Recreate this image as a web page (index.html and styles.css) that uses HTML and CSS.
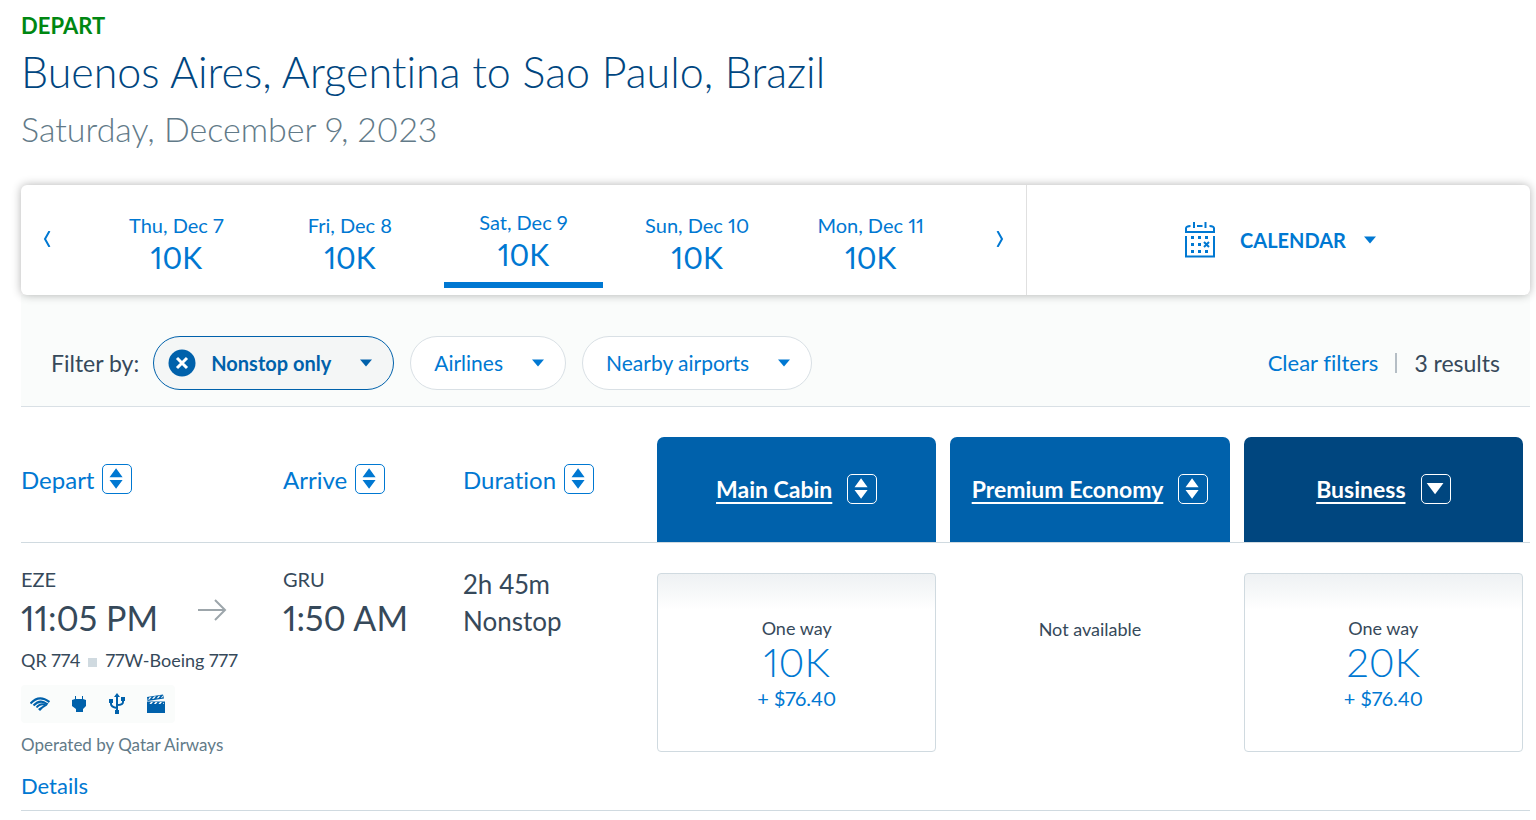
FILE: index.html
```
<!DOCTYPE html>
<html lang="en">
<head>
<meta charset="utf-8">
<meta name="viewport" content="width=device-width, initial-scale=1">
<title>Choose flights</title>
<link rel="stylesheet" href="styles.css">
</head>
<body>
<svg class="defs" aria-hidden="true">
  <symbol id="sort" viewBox="0 0 30 30"><path d="M14 3.500l7 9.500H7zM7 16h14l-7 9.500z"/></symbol>
  <symbol id="sorted" viewBox="0 0 30 30"><path d="M5 8.500h18l-9 12z"/></symbol>
  <symbol id="caret" viewBox="0 0 12 8"><path d="M0 .5h12L6 7.500z"/></symbol>
</svg>
<main class="page">
  <header class="heading">
    <p class="eyebrow">DEPART</p>
    <h1 class="route">Buenos Aires, Argentina to Sao Paulo, Brazil</h1>
    <p class="travel-date">Saturday, December 9, 2023</p>
  </header>

  <nav class="dates" aria-label="Travel dates">
    <div class="week">
      <button class="step step-back" aria-label="Previous dates"><svg width="10" height="16" viewBox="0 0 10 16"><path d="M7.500 0L3 8l4.500 8"/></svg></button>
      <button class="day"><span class="day-name">Thu, Dec 7</span><span class="day-price">10K</span></button>
      <button class="day"><span class="day-name">Fri, Dec 8</span><span class="day-price">10K</span></button>
      <button class="day day-on" aria-current="date"><span class="day-name">Sat, Dec 9</span><span class="day-price">10K</span></button>
      <button class="day"><span class="day-name">Sun, Dec 10</span><span class="day-price">10K</span></button>
      <button class="day"><span class="day-name">Mon, Dec 11</span><span class="day-price">10K</span></button>
      <button class="step step-on" aria-label="Next dates"><svg width="10" height="16" viewBox="0 0 10 16"><path d="M2.500 0L7 8l-4.500 8"/></svg></button>
    </div>
    <button class="calendar">
      <svg class="calendar-icon" width="30" height="36" viewBox="0 0 30 36">
        <path class="line" d="M1 10.500V6.500Q1 4 5.500 4M24.500 4Q29 4 29 6.500V10.500M0 10h30M9 0v6M20.500 0v6M12 4h5.500M1 14v20.500h28V14"/>
        <path d="M6 14h3v3H6zM13 14h3v3h-3zM20 14h3v3h-3zM6 21h3v3H6zM13 21h3v3h-3zM6 28h3v3H6zM13 28h3v3h-3zM20 28h3v3h-3z"/>
        <path class="line" d="M19 20l5 5M24 20l-5 5"/>
      </svg>
      <span>CALENDAR</span>
      <svg class="caret" width="12" height="8"><use href="#caret"/></svg>
    </button>
  </nav>

  <section class="filters" aria-label="Filters">
    <span class="filter-label">Filter by:</span>
    <button class="pill pill-on">
      <svg width="28" height="28" viewBox="0 0 28 28"><circle cx="14" cy="14" r="13.500"/><path class="cross" d="M9 9l10 10M19 9L9 19"/></svg>
      <span>Nonstop only</span>
      <svg class="caret" width="12" height="8"><use href="#caret"/></svg>
    </button>
    <button class="pill"><span>Airlines</span><svg class="caret" width="12" height="8"><use href="#caret"/></svg></button>
    <button class="pill"><span>Nearby airports</span><svg class="caret" width="12" height="8"><use href="#caret"/></svg></button>
    <div class="summary"><a href="#">Clear filters</a><span class="bar"></span><span>3 results</span></div>
  </section>

  <table class="results">
    <colgroup><col class="col-depart"><col class="col-arrive"><col class="col-duration"><col><col><col></colgroup>
    <thead>
      <tr>
        <th scope="col"><button class="sort">Depart<svg class="box"><use href="#sort"/></svg></button></th>
        <th scope="col"><button class="sort">Arrive<svg class="box"><use href="#sort"/></svg></button></th>
        <th scope="col"><button class="sort">Duration<svg class="box"><use href="#sort"/></svg></button></th>
        <th scope="col" class="cabin"><button class="cabin-head"><span>Main Cabin</span><svg class="box"><use href="#sort"/></svg></button></th>
        <th scope="col" class="cabin"><button class="cabin-head"><span>Premium Economy</span><svg class="box"><use href="#sort"/></svg></button></th>
        <th scope="col" class="cabin"><button class="cabin-head cabin-on"><span>Business</span><svg class="box"><use href="#sorted"/></svg></button></th>
      </tr>
    </thead>
    <tbody>
      <tr>
        <td>
          <div class="leg">
            <div><div class="airport">EZE</div><div class="time">11:05 PM</div></div>
            <svg class="arrow" width="30" height="22" viewBox="0 0 30 22"><path d="M1 11h27M18 1l10 10-10 10"/></svg>
          </div>
          <div class="plane">QR 774<span class="dot"></span>77W-Boeing 777</div>
          <div class="amenities">
            <svg width="20" height="20" viewBox="0 0 20 20"><path class="line" d="M.5 9.500Q9 0 19.500 8M3.500 11.500Q10 4.500 17 10M6.500 13.500Q10.500 8.500 15 11"/><path d="M8 15l7-4.500 4-2.500-2 3.500-4 2.500L10 17z"/></svg>
            <svg width="20" height="20" viewBox="0 0 20 20"><path d="M6 2h1v3h6V2h1v3l3 1v6l-3 3v3H7v-3l-4-3V6l3-1z"/></svg>
            <svg width="20" height="22" viewBox="0 0 20 22"><path class="line" d="M10 3v16M4 8v3q0 3 6 4M16 6v3q0 3-6 3"/><path d="M10 0l3 4H7zM2 6h4v4H2zM14 4h4v4h-4zM8 17h4v4H8z"/></svg>
            <svg width="20" height="20" viewBox="0 0 20 20"><path d="M1 10h18v9H1z"/><path fill-rule="evenodd" d="M1 3l16-2.500 1 4L1.500 7zM3.500 5.500l2-2.500-2 .3-1.500 2.400zM8 4.800L10 2.300l-2 .3-2 2.500zM12.500 4.100l2-2.500-2 .3-2 2.500zM16 3.700l1-1-.3-1.300-1.800 2.500z"/><path fill-rule="evenodd" d="M1 7.500h18V11H1zM5 8l-2 2.500h2L7 8zM9.500 8l-2 2.500h2l2-2.500zM14 8l-2 2.500h2L16 8zM18 8.500l-1.500 2H18z"/></svg>
          </div>
          <div class="operator">Operated by Qatar Airways</div>
          <a class="details" href="#">Details</a>
        </td>
        <td><div class="airport">GRU</div><div class="time">1:50 AM</div></td>
        <td><div class="duration">2h 45m<br>Nonstop</div></td>
        <td class="cabin"><button class="fare"><span class="fare-type">One way</span><span class="miles">10K</span><span class="cash">+ $76.40</span></button></td>
        <td class="cabin"><div class="unavailable">Not available</div></td>
        <td class="cabin"><button class="fare"><span class="fare-type">One way</span><span class="miles">20K</span><span class="cash">+ $76.40</span></button></td>
      </tr>
    </tbody>
  </table>
</main>
</body>
</html>
```
FILE: styles.css
```
* { box-sizing: border-box; }
body {
  margin: 0;
  background: #fff;
  color: #36495a;
  font-family: Lato, "Open Sans", sans-serif;
  font-size: 20px;
  font-variant-ligatures: none;
  font-variant-numeric: proportional-nums;
}
button {
  margin: 0;
  padding: 0;
  border: 0;
  background: none;
  color: inherit;
  font: inherit;
  font-variant-ligatures: none;
  font-variant-numeric: proportional-nums;
  cursor: pointer;
}
a { color: #0078d2; text-decoration: none; }
svg { flex: none; fill: currentColor; }
.defs { display: none; }
.line { fill: none; stroke: currentColor; stroke-width: 2; }
.page { padding: 12px 6px 0 21px; }

.eyebrow, .route, .travel-date { margin: 0; }
.eyebrow { color: #008712; font-size: 22px; font-weight: 700; line-height: 28px; }
.route { color: #00467f; font-size: 43px; font-weight: 300; line-height: 63px; }
.travel-date { color: #627a88; font-size: 34px; font-weight: 300; line-height: 52px; }

.dates {
  position: relative;
  display: grid;
  grid-template-columns: 2fr 1fr;
  height: 110px;
  margin-top: 30px;
  border-radius: 6px;
  background: #fff;
  box-shadow: 0 0 10px rgba(0, 0, 0, .3);
  color: #0078d2;
}
.week { display: grid; grid-template-columns: 61px repeat(5, 1fr) 61px; column-gap: 15px; border-right: 1px solid #e0e0e0; }
.step { padding-bottom: 3px; }
.step svg { fill: none; stroke: currentColor; stroke-width: 2; }
.step-back { padding-right: 9px; }
.step-on { padding-left: 9px; }
.day {
  display: flex;
  flex-direction: column;
  align-items: center;
  align-self: start;
  padding-top: 27px;
}
.day-name { line-height: 26px; }
.day-price { font-size: 30px; line-height: 39px; }
.day-on { height: 103px; padding-top: 24px; border-bottom: 6px solid #0078d2; }
.calendar { display: flex; align-items: center; justify-content: center; gap: 25px; padding-left: 4px; font-weight: 700; }
.calendar .caret { margin-left: -7px; }

.filters {
  display: flex;
  align-items: center;
  gap: 16px;
  height: 112px;
  padding: 24px 30px 0;
  border-bottom: 1px solid #d9e0e5;
  background: #fafcfb;
}
.filter-label { margin-right: -2px; font-size: 23px; }
.pill {
  display: flex;
  align-items: center;
  gap: 29px;
  height: 54px;
  padding: 0 21px 0 23px;
  border: 1px solid #d9e0e5;
  border-radius: 27px;
  background: #fff;
  color: #0078d2;
  font-size: 21px;
}
.pill-on { padding-left: 14px; border-color: #0061ab; background: #f4f6f6; color: #0061ab; font-size: 20px; font-weight: 700; }
.pill-on span { margin-left: -14px; }
.cross { fill: none; stroke: #fff; stroke-width: 3; }
.summary { display: flex; align-items: center; gap: 17px; margin-left: auto; font-size: 23px; }
.summary a { font-size: 22px; }
.bar { width: 2px; height: 20px; background: #b5bec5; }

.results { width: 100%; border-spacing: 0; table-layout: fixed; }
.col-depart { width: 262px; }
.col-arrive { width: 180px; }
.col-duration { width: 187px; }
th, td { padding: 0; border-bottom: 1px solid #d0dae0; text-align: left; font-weight: 400; }
th { height: 136px; vertical-align: middle; }
th.cabin { padding: 30px 7px 0; vertical-align: bottom; }
.sort { display: flex; align-items: center; gap: 8px; padding-top: 9px; color: #0078d2; font-size: 24px; }
.box { width: 30px; height: 30px; border: 1px solid currentColor; border-radius: 5px; }
.cabin-head {
  display: flex;
  align-items: center;
  justify-content: center;
  gap: 15px;
  width: 100%;
  height: 105px;
  padding-bottom: 2px;
  border-radius: 7px 7px 0 0;
  background: #0061ab;
  color: #fff;
  font-size: 23px;
  font-weight: 700;
}
.cabin-head span { text-decoration: underline; text-underline-offset: 4px; text-decoration-thickness: 2px; }
.cabin-on { background: #00467f; }

td { padding: 23px 0 4px; vertical-align: top; }
td.cabin { padding: 30px 7px; }
.leg { display: flex; align-items: center; gap: 39px; }
.arrow { margin-top: 10px; fill: none; stroke: #9da6ab; stroke-width: 2; }
.airport { line-height: 26px; }
.time { font-size: 34px; line-height: 51px; }
.plane { display: flex; align-items: center; line-height: 34px; font-size: 18px; }
.dot { width: 9px; height: 9px; margin: 4px 8px 0; background: #d0dae0; }
.amenities {
  display: flex;
  align-items: center;
  justify-content: space-between;
  width: 154px;
  height: 38px;
  margin-top: 8px;
  padding: 0 9px;
  border-radius: 4px;
  background: #fafcfb;
  color: #0061ab;
}
.operator { margin-top: 9px; color: #627a88; font-size: 17px; line-height: 26px; }
.details { display: block; margin-top: 8px; font-size: 22px; line-height: 40px; }
.duration { font-size: 26px; line-height: 37px; }
.fare {
  display: flex;
  flex-direction: column;
  align-items: center;
  justify-content: center;
  width: 100%;
  height: 179px;
  padding-top: 3px;
  border: 1px solid #d0dae0;
  border-radius: 4px;
  background: linear-gradient(#eef1f3, #fff 36px);
  color: #0078d2;
}
.fare-type { color: #36495a; font-size: 18px; line-height: 24px; }
.miles { font-size: 40px; font-weight: 300; line-height: 44px; }
.cash { line-height: 28px; }
.unavailable { padding-top: 43px; font-size: 18px; line-height: 26px; text-align: center; }
```
